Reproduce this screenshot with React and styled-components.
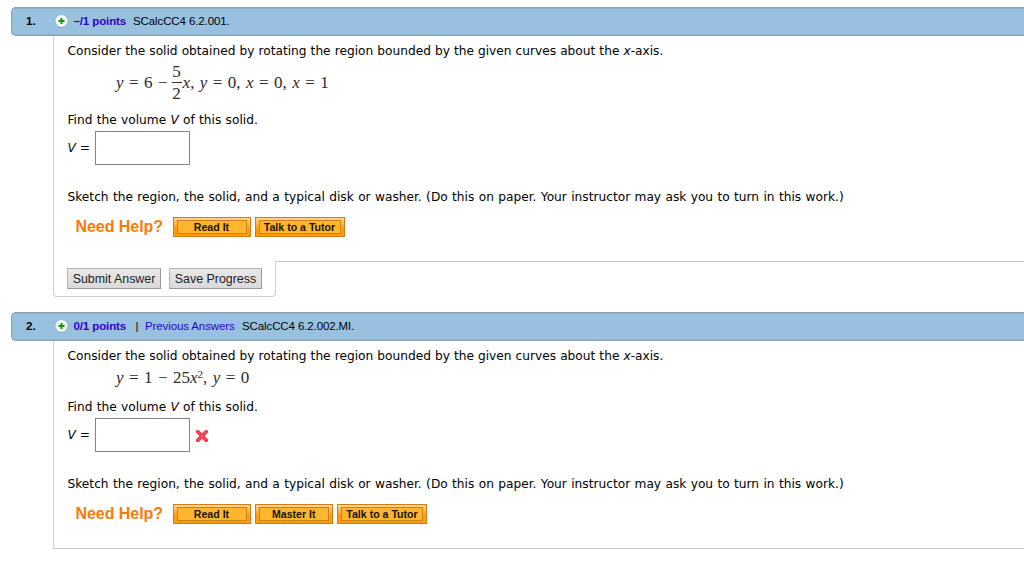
import React from 'react';
import styled, { createGlobalStyle } from 'styled-components';

const GlobalStyle = createGlobalStyle`
  * {
    box-sizing: border-box;
  }

  body {
    margin: 0;
    background: #fff;
    color: #000;
    font-family: 'DejaVu Sans', Verdana, sans-serif;
    font-size: 12.2px;
    overflow: hidden;
  }
`;

const Page = styled.main`
  height: 562px;
  padding: 7px 0 0 11px;
  overflow: hidden;
  white-space: nowrap;
`;

const Question = styled.section`
  height: 305px;
`;

const Header = styled.header`
  display: flex;
  align-items: center;
  height: 29px;
  padding-bottom: 1px;
  border: 1px solid #8aa2b4;
  border-right: 0;
  border-radius: 5px 0 0 5px;
  background: #98c1e0;
  box-shadow: inset 0 1px 0 #8fb3cf, inset 0 -1px 0 #8fb3cf;
  font-family: 'Liberation Sans', Arial, sans-serif;
  font-size: 11.5px;
  line-height: 14px;
`;

const Number = styled.b`
  width: 43px;
  padding-left: 14px;
`;

const PlusIcon = styled.svg`
  display: block;
  width: 14px;
  height: 14px;
  margin-right: 4.5px;
`;

const HeaderText = styled.span`
  width: ${({ $width }) => $width}px;
  color: ${({ $link }) => ($link ? '#3300cc' : '#000')};
  font-weight: ${({ $bold }) => ($bold ? 700 : 400)};
  letter-spacing: -0.11px;
`;

const Body = styled.div`
  height: ${({ $height }) => $height}px;
  margin-left: 42px;
  padding: 5px 0 0 13.5px;
  border-left: 1px solid #d4d4d4;
  border-bottom: ${({ $closed }) => ($closed ? '1px solid #ccc' : '0')};
`;

const Text = styled.p`
  height: 20px;
  margin: 0;
  line-height: 20px;
  word-spacing: ${({ $spacing }) => $spacing || 0}px;
`;

const Formula = styled.div`
  display: flex;
  align-items: center;
  height: ${({ $height }) => $height}px;
  margin-bottom: ${({ $gap }) => $gap}px;
  padding-left: 48.5px;
  color: #2a2a2a;
  font-family: 'Liberation Serif', 'Times New Roman', serif;
  font-size: 17px;
  line-height: 18px;
  word-spacing: 1.2px;

  sup {
    font-size: 11px;
    line-height: 0;
    vertical-align: 5px;
  }
`;

const Fraction = styled.span`
  display: flex;
  flex-direction: column;
  width: 10px;
  margin: 0 1px 0 4px;
  text-align: center;
  line-height: 21px;

  span:first-child {
    border-bottom: 1px solid #333;
  }
`;

const AnswerRow = styled.label`
  display: flex;
  align-items: center;
  height: 34px;
  margin-top: 1px;
`;

const AnswerLabel = styled.span`
  width: 27.5px;
`;

const AnswerInput = styled.input`
  width: 95px;
  height: 34px;
  margin: 0;
  border: 1px solid #848484;
  border-radius: 0;
  background: #fff;
`;

const WrongIcon = styled.svg`
  width: 14px;
  height: 14px;
  margin: 2px 0 0 5px;
`;

const HelpRow = styled.div`
  display: flex;
  align-items: center;
  height: 20px;
  margin-top: 10px;
  padding-left: 8px;
  font-family: 'Liberation Sans', Arial, sans-serif;
`;

const HelpTitle = styled.span`
  width: 97px;
  color: #f97b08;
  font-size: 16px;
  font-weight: 700;
  letter-spacing: -0.05px;
`;

const HelpButton = styled.button`
  display: flex;
  width: ${({ $width }) => $width}px;
  height: 20px;
  margin: 0 4px 0 0;
  padding: 2px 3px;
  border: 1px solid #d07d18;
  border-radius: 0;
  background: linear-gradient(#ffd693, #ff9a0b 60%);
  color: #1a1000;
  font: 700 10.6px/13px 'Liberation Sans', Arial, sans-serif;
`;

const HelpButtonFace = styled.span`
  flex: 1;
  height: 14px;
  border: 1px solid #cb841c;
  background: #ffb62c;
`;

const Footer = styled.footer`
  display: flex;
  height: 36px;
  margin-left: 42px;
`;

const SubmitTab = styled.div`
  display: flex;
  gap: 8px;
  width: 223px;
  padding: 7px 0 0 13px;
  border: solid #d0d0d0;
  border-width: 0 1px 1px;
  border-radius: 0 0 4px 4px;
`;

const Rule = styled.div`
  flex: 1;
  border-top: 1px solid #ccc;
`;

const SubmitButton = styled.button`
  width: ${({ $width }) => $width}px;
  height: 21px;
  padding: 0;
  border: 1px solid #b5b5b5;
  border-right-color: #999;
  border-bottom-color: #999;
  border-radius: 0;
  background: linear-gradient(#e8e8e8, #dadada);
  color: #222;
  font: 12.4px/18px 'Liberation Sans', Arial, sans-serif;
`;

const Plus = () => (
  <PlusIcon viewBox="0 0 14 14">
    <circle cx="6.5" cy="7.8" r="6" fill="#819fb5" />
    <circle cx="6.5" cy="7" r="6" fill="#f7f7f2" />
    <path d="M6.5 4v6M3.5 7h6" stroke="#129812" strokeWidth="2" />
  </PlusIcon>
);

const Wrong = () => (
  <WrongIcon viewBox="0 0 14 14">
    <path d="M2.8 2.8L11.2 11.2M11.2 2.8L2.8 11.2" stroke="#e91f3c" strokeWidth="3.6" strokeLinecap="round" />
    <path d="M3 3L11 11M11 3L3 11" stroke="#ff4a61" strokeWidth="2" strokeLinecap="round" />
  </WrongIcon>
);

const Answer = ({ wrong }) => (
  <AnswerRow>
    <AnswerLabel><i>V</i> =</AnswerLabel>
    <AnswerInput />
    {wrong && <Wrong />}
  </AnswerRow>
);

const Intro = () => (
  <Text $spacing={0.18}>
    Consider the solid obtained by rotating the region bounded by the given curves about the <i>x</i>-axis.
  </Text>
);

const FindVolume = () => (
  <Text $spacing={0.4}>Find the volume <i>V</i> of this solid.</Text>
);

const SketchText = styled(Text)`
  margin-top: 22px;
`;

const Sketch = () => (
  <SketchText $spacing={0.5}>
    Sketch the region, the solid, and a typical disk or washer. (Do this on paper. Your instructor may ask you to turn in this work.)
  </SketchText>
);

const Help = ({ master }) => (
  <HelpRow>
    <HelpTitle>Need Help?</HelpTitle>
    <HelpButton $width={78}><HelpButtonFace>Read It</HelpButtonFace></HelpButton>
    {master && <HelpButton $width={78.5}><HelpButtonFace>Master It</HelpButtonFace></HelpButton>}
    <HelpButton $width={90}><HelpButtonFace>Talk to a Tutor</HelpButtonFace></HelpButton>
  </HelpRow>
);

const App = () => (
  <>
    <GlobalStyle />
    <Page>
      <Question>
        <Header>
          <Number>1.</Number>
          <Plus />
          <HeaderText $width={59.5} $link $bold>–/1 points</HeaderText>
          <HeaderText>SCalcCC4 6.2.001.</HeaderText>
        </Header>
        <Body $height={225}>
          <Intro />
          <Formula $height={43} $gap={6}>
            <span><i>y</i> = 6 −</span>
            <Fraction>
              <span>5</span>
              <span>2</span>
            </Fraction>
            <span><i>x</i>, <i>y</i> = 0, <i>x</i> = 0, <i>x</i> = 1</span>
          </Formula>
          <FindVolume />
          <Answer />
          <Sketch />
          <Help />
        </Body>
        <Footer>
          <SubmitTab>
            <SubmitButton $width={94}>Submit Answer</SubmitButton>
            <SubmitButton $width={93}>Save Progress</SubmitButton>
          </SubmitTab>
          <Rule />
        </Footer>
      </Question>
      <Question>
        <Header>
          <Number>2.</Number>
          <Plus />
          <HeaderText $width={62} $link $bold>0/1 points</HeaderText>
          <HeaderText $width={9.5}>|</HeaderText>
          <HeaderText $width={97} $link>Previous Answers</HeaderText>
          <HeaderText>SCalcCC4 6.2.002.MI.</HeaderText>
        </Header>
        <Body $height={208} $closed>
          <Intro />
          <Formula $height={24} $gap={7}>
            <span><i>y</i> = 1 − 25<i>x</i><sup>2</sup>, <i>y</i> = 0</span>
          </Formula>
          <FindVolume />
          <Answer wrong />
          <Sketch />
          <Help master />
        </Body>
      </Question>
    </Page>
  </>
);

export default App;
